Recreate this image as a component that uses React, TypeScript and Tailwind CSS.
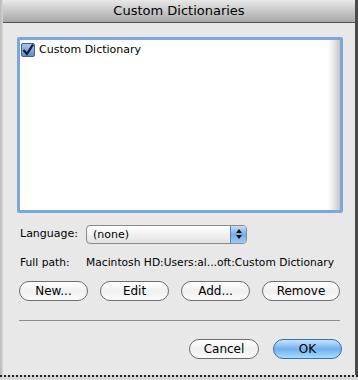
import React from "react";

const font = { fontFamily: '"DejaVu Sans", "Liberation Sans", sans-serif' };

function Btn({ label, w, primary }: { label: string; w: number; primary?: boolean }) {
  return (
    <div
      className={
        "h-[20px] rounded-full border flex items-center justify-center text-[12px] text-black " +
        (primary
          ? "border-[#3d6eab] bg-gradient-to-b from-[#c9e2fb] via-[#6fb0ef] to-[#a9dcfd]"
          : "border-[#6d6d6d] bg-gradient-to-b from-[#ffffff] via-[#f0f0f0] to-[#fbfbfb]")
      }
      style={{ width: w }}
    >
      {label}
    </div>
  );
}

export default function App() {
  return (
    <div className="w-[358px] h-[380px] overflow-hidden flex flex-col bg-[#5a5a5a]" style={font}>
      <div className="flex h-[375px]">
        <div className="w-[3px] h-full bg-gradient-to-r from-[#b8b8b8] to-[#d6d6d6]" />
        <div className="w-[352px] h-full flex flex-col bg-[#e8e8e8]">
          <div className="h-[23px] rounded-t-[5px] border-b border-[#515151] bg-gradient-to-b from-[#e8e8e8] to-[#a9a9a9] flex items-center justify-center text-[13px] text-black">
            Custom Dictionaries
          </div>
          <div className="flex flex-col pl-[14px] pr-[12px] pt-[14px]">
            <div className="h-[176px] w-[326px] border-[3px] border-[#7ba7da] rounded-[2px] bg-white flex">
              <div className="flex-1 flex items-start pt-[2px] pl-[1px]">
                <div className="flex items-center gap-[4px]">
                  <div className="w-[14px] h-[14px] rounded-[2px] border border-[#4a5f86] bg-gradient-to-b from-[#a9c6ea] to-[#5d8fd0] flex items-center justify-center">
                    <svg width="12" height="12" viewBox="0 0 12 12">
                      <path d="M1.5 6 L5 10 L11 0.5" stroke="#0d1a33" strokeWidth="2.2" fill="none" />
                    </svg>
                  </div>
                  <span className="text-[11px] text-black">Custom Dictionary</span>
                </div>
              </div>
              <div className="w-[12px] h-full bg-gradient-to-r from-[#ffffff] via-[#e6e6e6] to-[#c4c4c4]" />
            </div>

            <div className="flex items-center mt-[11px] h-[20px]">
              <span className="w-[69px] pl-[3px] text-[11px] text-black">Language:</span>
              <div className="w-[161px] h-[19px] rounded-[4px] border border-[#8a8a8a] bg-gradient-to-b from-[#ffffff] via-[#f1f1f1] to-[#e2e2e2] flex overflow-hidden">
                <span className="flex-1 pl-[6px] text-[11px] leading-[17px] text-black">(none)</span>
                <div className="w-[16px] h-full border-l border-[#5b83b8] bg-gradient-to-b from-[#c8def7] via-[#76abe8] to-[#9fcaf5] flex flex-col items-center justify-center gap-[2px]">
                  <svg width="6" height="4" viewBox="0 0 6 4"><path d="M3 0 L6 4 L0 4 Z" fill="#111" /></svg>
                  <svg width="6" height="4" viewBox="0 0 6 4"><path d="M0 0 L6 0 L3 4 Z" fill="#111" /></svg>
                </div>
              </div>
            </div>

            <div className="flex items-center mt-[11px] h-[16px] text-[10.7px] text-black">
              <span className="w-[69px] pl-[3px]">Full path:</span>
              <span>Macintosh HD:Users:al...oft:Custom Dictionary</span>
            </div>

            <div className="flex gap-[12px] mt-[10px] pl-[2px]">
              <Btn label="New..." w={69} />
              <Btn label="Edit" w={69} />
              <Btn label="Add..." w={69} />
              <Btn label="Remove" w={78} />
            </div>

            <div className="h-px bg-[#8e8e8e] mt-[19px] ml-[2px] w-[321px]" />

            <div className="flex justify-end gap-[14px] mt-[18px] pr-[1px]">
              <Btn label="Cancel" w={70} />
              <Btn label="OK" w={69} primary />
            </div>
          </div>
        </div>
        <div className="w-[3px] h-full bg-[#4a4a4a]" />
      </div>
      <div className="h-[5px] bg-[#d8d8d8] border-t-2 border-dotted border-[#222]" />
    </div>
  );
}
